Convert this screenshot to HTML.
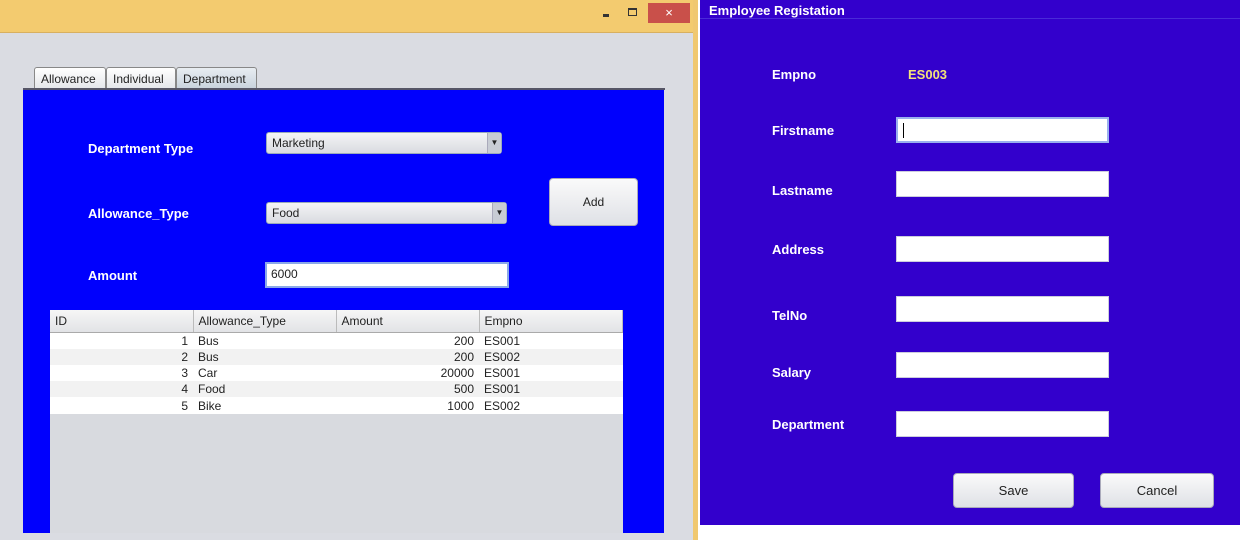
<!DOCTYPE html>
<html><head><style>
*{margin:0;padding:0;box-sizing:border-box}
body{width:1240px;height:540px;position:relative;overflow:hidden;background:#fff;font-family:"Liberation Sans",sans-serif;font-size:12px;color:#222}
.a{position:absolute}
.lbl{position:absolute;color:#fff;font-weight:bold;font-size:13px}
.combo{position:absolute;background:linear-gradient(#f4f4f6,#d9dbe0);border:1px solid #9ab;border-radius:3px;padding:3px 5px;font-size:12px}
.combo .ar{position:absolute;right:0;top:0;bottom:0;width:14px;background:#c8ccd4;border-left:1px solid #aab;font-size:8px;text-align:center;line-height:20px}
.tf{position:absolute;background:#fff;border:2px solid #8aa8e8;padding:3px 4px;font-size:12px}
.btn{position:absolute;background:linear-gradient(#fafafa,#dfe1e6);border:1px solid #aab;border-radius:4px;text-align:center;font-size:13px;color:#222}
.tab{position:absolute;top:67px;height:22px;border:1px solid #888;border-bottom:none;border-radius:3px 3px 0 0;background:linear-gradient(#fff,#e4e6ea);font-size:12px;padding:4px 6px 0}
table{border-collapse:collapse;width:573px;font-size:12px}
th{background:linear-gradient(#f6f6f6,#e2e3e6);font-weight:normal;text-align:left;padding:0 5px;height:22px;border-right:1px solid #bbb;border-bottom:1px solid #aaa}
td{height:16.3px;padding:0 5px;line-height:16px}
tr:nth-child(odd) td{background:#f2f2f2}
tr:nth-child(even) td{background:#fff}
.r{text-align:right}
.rl{position:absolute;color:#fff;font-weight:bold;font-size:13px;left:772px}
.rf{position:absolute;left:896px;width:213px;height:26px;background:#fff;border:1px solid #ccd}
</style></head><body>
<div class="a" style="left:0;top:0;width:697px;height:540px;background:#dadce2"></div>
<div class="a" style="left:0;top:0;width:697px;height:33px;background:#f3cb6f;border-bottom:1px solid #d8b060"></div>
<div class="a" style="left:693px;top:0;width:5px;height:540px;background:#f0c870"></div>
<div class="a" style="left:603px;top:14px;width:6px;height:3px;background:#333"></div>
<div class="a" style="left:628px;top:8px;width:9px;height:8px;border:1px solid #333;border-top-width:2px"></div>
<div class="a" style="left:648px;top:3px;width:42px;height:20px;background:#c9504a;color:#fff;text-align:center;font-size:13px;line-height:20px">×</div>
<div class="tab" style="left:34px;width:72px">Allowance</div>
<div class="tab" style="left:106px;width:70px">Individual</div>
<div class="tab" style="left:176px;width:81px;background:linear-gradient(#e8edf2,#c8d2dc)">Department</div>
<div class="a" style="left:23px;top:88px;width:642px;height:2px;background:#556"></div>
<div class="a" style="left:23px;top:90px;width:641px;height:443px;background:#0000fd"></div>
<div class="lbl" style="left:88px;top:141px">Department Type</div>
<div class="lbl" style="left:88px;top:206px">Allowance_Type</div>
<div class="lbl" style="left:88px;top:268px">Amount</div>
<div class="combo" style="left:266px;top:132px;width:236px;height:22px">Marketing<div class="ar">▼</div></div>
<div class="combo" style="left:266px;top:202px;width:241px;height:22px">Food<div class="ar">▼</div></div>
<div class="tf" style="left:265px;top:262px;width:244px;height:26px">6000</div>
<div class="btn" style="left:549px;top:178px;width:89px;height:48px;line-height:46px;font-size:12px">Add</div>
<div class="a" style="left:50px;top:310px;width:573px;height:223px;background:#d8dadf">
<table>
<tr><th style="width:143px">ID</th><th style="width:143px">Allowance_Type</th><th style="width:143px">Amount</th><th>Empno</th></tr>
<tr><td class="r">1</td><td>Bus</td><td class="r">200</td><td>ES001</td></tr>
<tr><td class="r">2</td><td>Bus</td><td class="r">200</td><td>ES002</td></tr>
<tr><td class="r">3</td><td>Car</td><td class="r">20000</td><td>ES001</td></tr>
<tr><td class="r">4</td><td>Food</td><td class="r">500</td><td>ES001</td></tr>
<tr><td class="r">5</td><td>Bike</td><td class="r">1000</td><td>ES002</td></tr>
</table></div>
<div class="a" style="left:700px;top:0;width:540px;height:525px;background:#3300cc"></div>
<div class="a" style="left:700px;top:18px;width:540px;height:1px;background:#4a2ad8"></div>
<div class="a" style="left:709px;top:3px;color:#fff;font-weight:bold;font-size:13px">Employee Registation</div>
<div class="rl" style="top:67px">Empno</div>
<div class="a" style="left:908px;top:67px;color:#f3e27a;font-weight:bold;font-size:13px">ES003</div>
<div class="rl" style="top:123px">Firstname</div>
<div class="rf" style="top:117px;border:2px solid #9ab0ee"><div class="a" style="left:5px;top:4px;width:1px;height:15px;background:#000"></div></div>
<div class="rl" style="top:183px">Lastname</div>
<div class="rf" style="top:171px"></div>
<div class="rl" style="top:242px">Address</div>
<div class="rf" style="top:236px"></div>
<div class="rl" style="top:308px">TelNo</div>
<div class="rf" style="top:296px"></div>
<div class="rl" style="top:365px">Salary</div>
<div class="rf" style="top:352px"></div>
<div class="rl" style="top:417px">Department</div>
<div class="rf" style="top:411px"></div>
<div class="btn" style="left:953px;top:473px;width:121px;height:35px;line-height:33px">Save</div>
<div class="btn" style="left:1100px;top:473px;width:114px;height:35px;line-height:33px">Cancel</div>
</body></html>
